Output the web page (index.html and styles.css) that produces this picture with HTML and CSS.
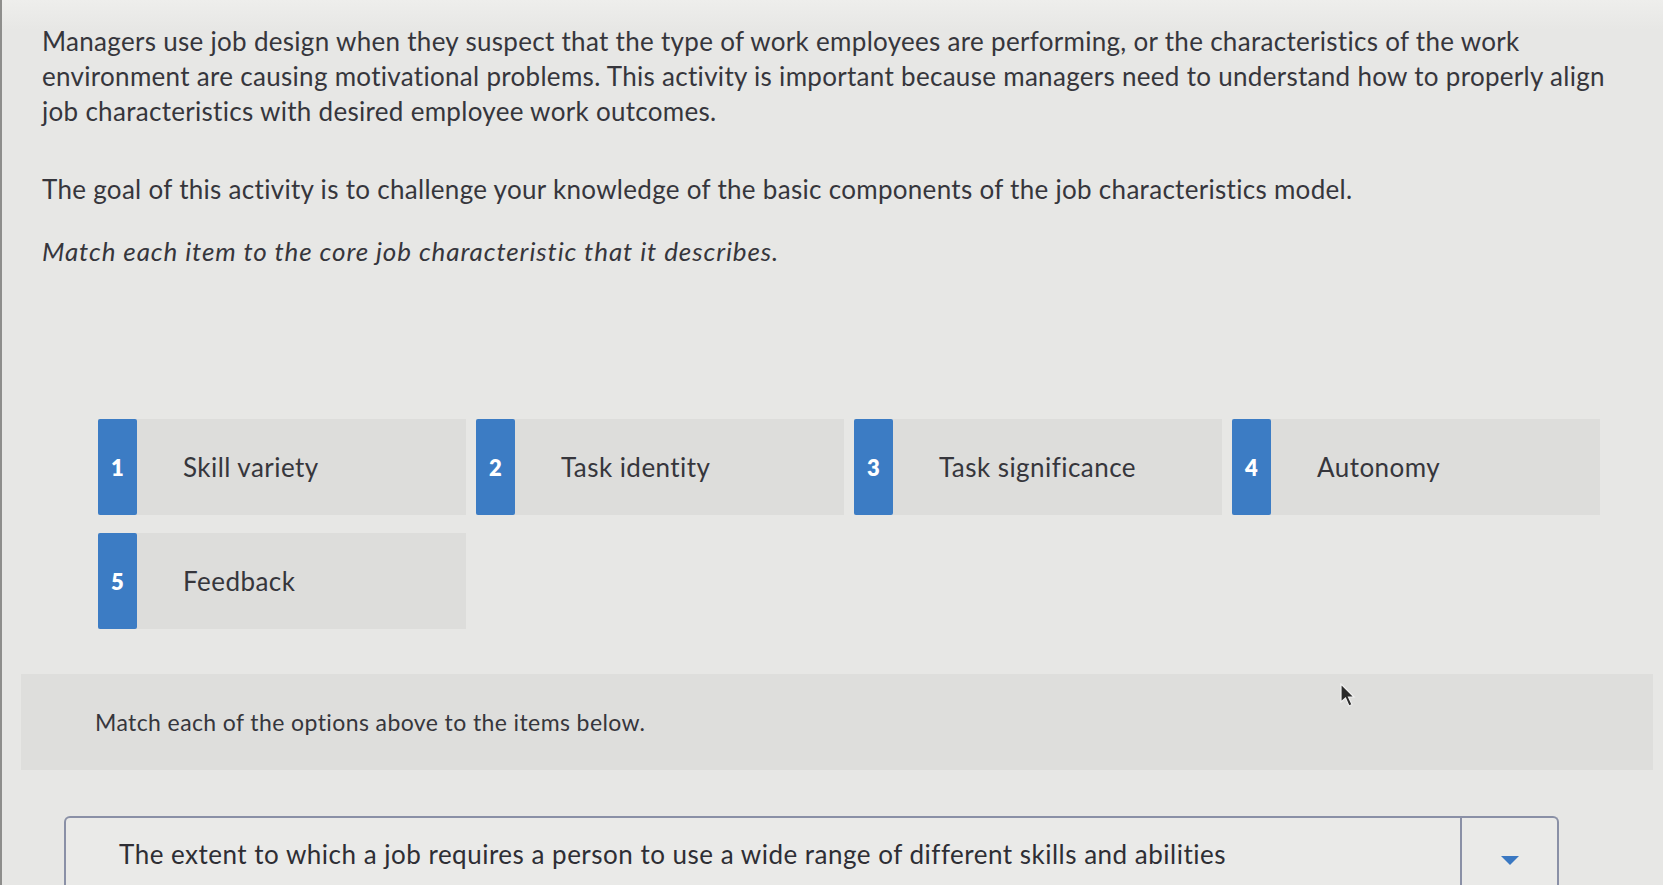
FILE: index.html
```html
<!DOCTYPE html>
<html lang="en">
<head>
<meta charset="utf-8">
<title>Job characteristics matching</title>
<link rel="stylesheet" href="styles.css">
</head>
<body>
<div class="page">
  <section class="intro">
    <p class="lead">Managers use job design when they suspect that the type of work employees are performing, or the characteristics of the work environment are causing motivational problems. This activity is important because managers need to understand how to properly align job characteristics with desired employee work outcomes.</p>
    <p class="goal">The goal of this activity is to challenge your knowledge of the basic components of the job characteristics model.</p>
    <p class="instr">Match each item to the core job characteristic that it describes.</p>
  </section>

  <section class="options">
    <div class="card"><span class="badge">1</span><span class="label">Skill variety</span></div>
    <div class="card"><span class="badge">2</span><span class="label">Task identity</span></div>
    <div class="card"><span class="badge">3</span><span class="label">Task significance</span></div>
    <div class="card"><span class="badge">4</span><span class="label">Autonomy</span></div>
    <div class="card"><span class="badge">5</span><span class="label">Feedback</span></div>
  </section>

  <section class="panel">
    <p>Match each of the options above to the items below.</p>
  </section>

  <section class="items">
    <div class="select">
      <div class="select-text">The extent to which a job requires a person to use a wide range of different skills and abilities</div>
      <div class="select-arrow"><span class="tri"></span></div>
    </div>
  </section>

  <svg class="cursor" width="18" height="26" viewBox="0 0 18 26"><path d="M1 1 L1 19 L5.5 15 L9 23 L12 21.5 L8.5 14 L14 14 Z" fill="#2b2b2b" stroke="#f0f0f0" stroke-width="1.2"/></svg>
</div>
</body>
</html>
```

FILE: styles.css
```css
html, body {
  margin: 0;
  padding: 0;
  height: 100%;
  overflow: hidden;
}
body {
  background: #e7e7e5;
  font-family: Lato, "Open Sans", "Liberation Sans", sans-serif;
  color: #36363c;
}
.page {
  position: relative;
  height: 885px;
  border-left: 2px solid #8e8e8c;
  box-sizing: border-box;
  background: linear-gradient(#eeeeec 0, #e7e7e5 30px);
}
.intro {
  padding: 24px 0 0 40px;
  width: 1600px;
}
.intro p {
  margin: 0;
  font-size: 26px;
  line-height: 35px;
  letter-spacing: 0.3px;
}
.goal { margin-top: 43px !important; }
.instr {
  margin-top: 27px !important;
  font-style: italic;
  letter-spacing: 0.9px !important;
}
.options {
  display: grid;
  grid-template-columns: repeat(4, 368px);
  column-gap: 10px;
  row-gap: 18px;
  margin: 150px 0 0 96px;
}
.card {
  display: flex;
  align-items: center;
  height: 96px;
  background: #dddddb;
}
.badge {
  flex: 0 0 39px;
  align-self: stretch;
  display: flex;
  align-items: center;
  justify-content: center;
  background: #3c7cc4;
  color: #fff;
  font-weight: 800;
  font-size: 22px;
  border-radius: 2px;
}
.label {
  padding-left: 46px;
  font-size: 26px;
  letter-spacing: 0.45px;
}
.panel {
  margin: 45px 10px 0 19px;
  height: 96px;
  background: #dededc;
  display: flex;
  align-items: center;
}
.panel p {
  margin: 0;
  padding-left: 74px;
  font-size: 23px;
  letter-spacing: 0.4px;
}
.items {
  margin: 46px 0 0 62px;
}
.select {
  display: flex;
  width: 1495px;
  height: 80px;
  border: 2px solid #8a90a6;
  border-bottom: none;
  border-radius: 6px 6px 0 0;
  box-sizing: border-box;
  background: #eaeae8;
}
.select-text {
  flex: 1;
  padding: 20px 0 0 53px;
  font-size: 26px;
  letter-spacing: 0.5px;
  color: #2e2e34;
}
.select-arrow {
  flex: 0 0 97px;
  border-left: 2px solid #8a90a6;
  display: flex;
  justify-content: center;
  padding-top: 38px;
  box-sizing: border-box;
}
.tri {
  width: 0;
  height: 0;
  border-left: 9px solid transparent;
  border-right: 9px solid transparent;
  border-top: 9px solid #3a78c2;
}
.cursor {
  position: absolute;
  left: 1338px;
  top: 683px;
}
```
